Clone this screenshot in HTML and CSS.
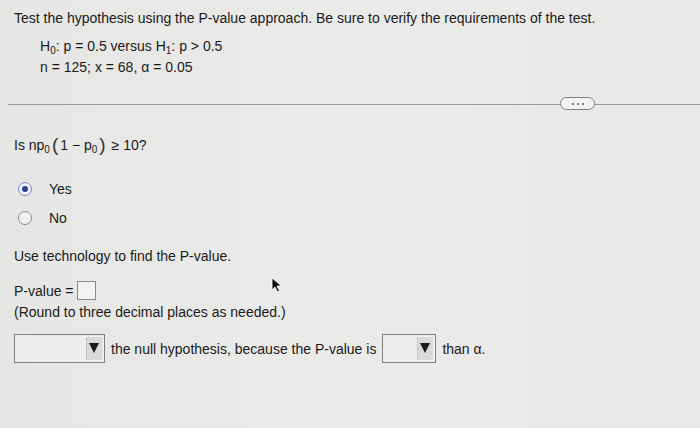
FILE: index.html
```html
<!DOCTYPE html>
<html>
<head>
<meta charset="utf-8">
<link rel="stylesheet" href="styles.css">
</head>
<body>
<div class="page">
  <div class="header">
    <p class="intro">Test the hypothesis using the P-value approach. Be sure to verify the requirements of the test.</p>
    <p class="given first">H<sub>0</sub>: p = 0.5 versus H<sub>1</sub>: p &gt; 0.5</p>
    <p class="given">n = 125; x = 68, α = 0.05</p>
  </div>
  <div class="divider">
    <span class="more"><i></i><i></i><i></i></span>
  </div>
  <div class="body">
    <p class="q">Is np<sub>0</sub><span class="paren">(</span>1 − p<sub>0</sub><span class="paren">)</span> ≥ 10?</p>
    <div class="options">
      <label class="opt"><span class="radio on"></span>Yes</label>
      <label class="opt"><span class="radio"></span>No</label>
    </div>
    <p class="q2">Use technology to find the P-value.</p>
    <p class="pv">P-value = <span class="ans"></span></p>
    <p class="round">(Round to three decimal places as needed.)</p>
    <div class="concl">
      <span class="dd wide"><span class="arrow"></span></span>
      <span>the null hypothesis, because the P-value is</span>
      <span class="dd narrow"><span class="arrow"></span></span>
      <span>than α.</span>
    </div>
  </div>
  <svg class="cursor" width="12" height="16" viewBox="0 0 12 16"><path d="M1 1 L1 13 L4 10 L6.5 15 L8.5 14 L6 9 L10.5 9 Z" fill="#111" stroke="#fff" stroke-width="0.8"/></svg>
</div>
</body>
</html>
```
FILE: styles.css
```css
html, body {
  margin: 0;
  padding: 0;
  background: #e9e9e7;
}
.page {
  position: relative;
  width: 700px;
  height: 428px;
  overflow: hidden;
  font-family: "Liberation Sans", Arial, sans-serif;
  font-size: 14px;
  color: #1a1a1a;
  background: linear-gradient(90deg, #e6e6e4 0%, #ebebe9 50%, #e8e8e6 100%);
}
p { margin: 0; }
sub { font-size: 10px; vertical-align: -3px; line-height: 0; }
.header {
  padding: 10px 0 0 14px;
}
.intro { line-height: 17px; }
.given {
  padding-left: 26px;
  line-height: 21px;
}
.given.first { margin-top: 9px; }
.divider {
  margin-top: 26px;
  margin-left: 8px;
  height: 1px;
  background: #9a9a98;
  position: relative;
}
.more {
  position: absolute;
  left: 552px;
  top: -7px;
  width: 33px;
  height: 11px;
  border: 1.5px solid #7e7e7c;
  border-radius: 7px;
  background: #f3f3f1;
  display: flex;
  align-items: center;
  justify-content: center;
  gap: 3px;
}
.more i {
  width: 2px;
  height: 2px;
  border-radius: 50%;
  background: #555;
}
.body {
  padding: 31px 0 0 14px;
}
.q { line-height: 18px; }
.paren { font-size: 19px; color: #333; padding: 0 2px; vertical-align: -1px; }
.options {
  margin-top: 26px;
  margin-left: 4px;
  display: flex;
  flex-direction: column;
  gap: 12px;
}
.opt {
  display: flex;
  align-items: center;
  height: 17px;
}
.radio {
  width: 12px;
  height: 12px;
  border: 1.5px solid #8c8c94;
  border-radius: 50%;
  background: #f1f1f3;
  margin-right: 17px;
  box-sizing: content-box;
  position: relative;
}
.radio.on {
  border-color: #7b84c8;
  background: #eef0fa;
}
.radio.on::after {
  content: "";
  position: absolute;
  left: 3px;
  top: 3px;
  width: 6px;
  height: 6px;
  border-radius: 50%;
  background: #2f3d9a;
}
.q2 { margin-top: 22px; line-height: 16px; }
.pv {
  margin-top: 17px;
  display: flex;
  align-items: center;
  line-height: 18px;
}
.ans {
  display: inline-block;
  width: 17px;
  height: 17px;
  border: 1px solid #8a8a8a;
  background: #f3f3f2;
  margin-left: 3px;
}
.round { margin-top: 4px; line-height: 16px; }
.concl {
  margin-top: 14px;
  display: flex;
  align-items: center;
  gap: 6px;
}
.dd {
  height: 29px;
  border: 1.5px solid #7e7e7e;
  background: #eeeeed;
  display: flex;
  justify-content: flex-end;
  align-items: stretch;
  padding: 2px;
  box-sizing: border-box;
}
.dd.wide { width: 91px; }
.dd.narrow { width: 54px; }
.arrow {
  width: 15px;
  background: #dadad8;
  border-left: 1px solid #c4c4c2;
  position: relative;
}
.arrow::after {
  content: "";
  position: absolute;
  left: 2px;
  top: 6px;
  border-left: 5px solid transparent;
  border-right: 5px solid transparent;
  border-top: 10px solid #1a1a1a;
}
.cursor {
  position: absolute;
  left: 271px;
  top: 277px;
}
```
